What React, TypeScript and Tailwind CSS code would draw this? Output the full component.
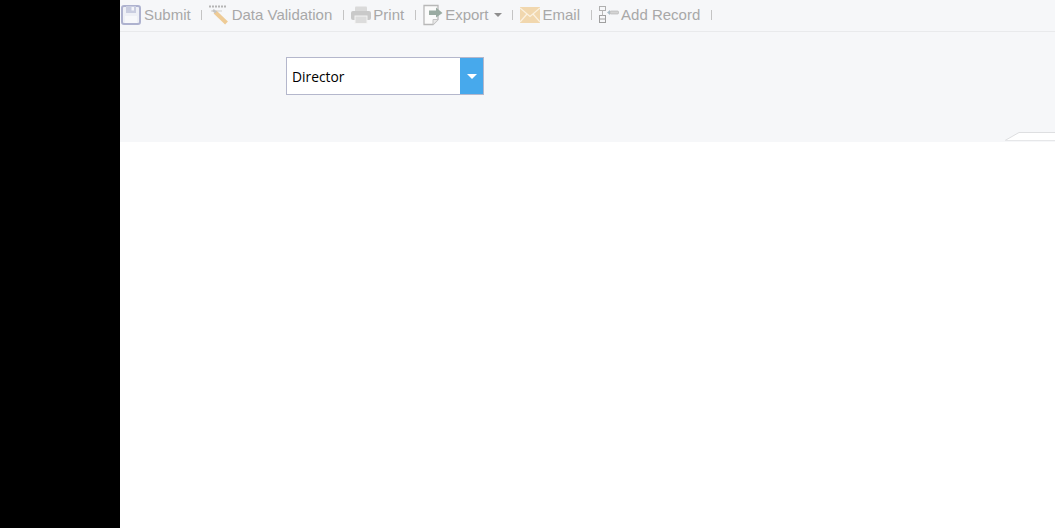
import React from "react";

const labelClass = "text-[15px] leading-none text-[#a8a8a8]";

function Divider({ className }: { className: string }) {
  return <div className={`h-[10px] w-px shrink-0 bg-[#c4c4c4] ${className}`}></div>;
}

function SaveIcon() {
  return (
    <svg width="20" height="20" viewBox="0 0 20 20" className="shrink-0">
      <rect x="1" y="1" width="18" height="18" rx="2" fill="#eef0f6" stroke="#aeb2cf" strokeWidth="2" />
      <rect x="5" y="1" width="10" height="7" fill="#c9cde0" />
      <rect x="10.500" y="2" width="2.500" height="3.500" fill="#f4f5f9" />
      <rect x="4" y="11" width="12" height="7" fill="#f7f8fb" />
    </svg>
  );
}

function RulerIcon() {
  return (
    <svg width="20" height="20" viewBox="0 0 20 20" className="shrink-0">
      <path d="M0 1.500h18" stroke="#b5b5b5" strokeWidth="2" strokeDasharray="2 1" />
      <path d="M2 6h11" stroke="#cfcfcf" strokeWidth="1" />
      <path d="M6 7l11.500 11" stroke="#eecb96" strokeWidth="4" />
      <path d="M4 5l3 2.500" stroke="#c4c4c4" strokeWidth="2.500" />
    </svg>
  );
}

function PrintIcon() {
  return (
    <svg width="20" height="18" viewBox="0 0 20 18" className="shrink-0">
      <rect x="4" y="0.500" width="12" height="6" rx="1" fill="#dadada" />
      <rect x="0" y="5" width="20" height="9" rx="2" fill="#c9c9c9" />
      <rect x="4" y="10" width="12" height="7.500" fill="#dcdcdc" stroke="#f4f4f4" strokeWidth="1" />
    </svg>
  );
}

function ExportIcon() {
  return (
    <svg width="20" height="22" viewBox="0 0 20 22" className="shrink-0">
      <path d="M1 1.500h14v14l-5 5H1z" fill="#fbfbfb" stroke="#b8b8b8" strokeWidth="1.300" />
      <path d="M10 20.500v-5h5" fill="#e8e8e8" stroke="#c4c4c4" strokeWidth="1" />
      <path d="M6 6.500h7V3.500L19.500 9 13 13.500V11H6z" fill="#9aaba2" />
    </svg>
  );
}

function MailIcon() {
  return (
    <svg width="20" height="16" viewBox="0 0 20 16" className="shrink-0">
      <rect width="20" height="16" fill="#f1d7ae" />
      <path d="M0 1l10 8.500 10-8.500M0 15l7-8M20 15l-7-8" fill="none" stroke="#fbf1e0" strokeWidth="1.300" />
    </svg>
  );
}

function RecordIcon() {
  return (
    <svg width="20" height="17" viewBox="0 0 20 17" className="shrink-0">
      <rect x="0.500" y="0.500" width="6" height="4" fill="#f6f7f9" stroke="#b0b0b0" />
      <rect x="0.500" y="9.500" width="6" height="7" fill="#f6f7f9" stroke="#a0a0a0" />
      <path d="M0.500 13h6" stroke="#a0a0a0" />
      <path d="M3.500 4.500v5" stroke="#b8b8b8" />
      <path d="M8 6.500l3-2.500v5z" fill="#a9bcc8" />
      <rect x="11" y="5" width="8.500" height="3" rx="1" fill="#d4d4d4" stroke="#b0b0b0" strokeWidth="0.600" />
    </svg>
  );
}

function App() {
  return (
    <div className="flex h-[528px] w-[1055px] overflow-hidden bg-white font-['Liberation_Sans',sans-serif]">
      <div className="w-[120px] shrink-0 bg-black"></div>
      <div className="flex min-w-0 flex-1 flex-col">
        <div className="relative h-[142px] shrink-0 bg-[#f6f7f9]">
          <div className="flex h-[32px] items-center border-b border-[#e9eaec] pb-[2px] pl-px">
            <SaveIcon />
            <span className={`${labelClass} ml-[3px]`}>Submit</span>
            <Divider className="ml-[10px]" />
            <div className="ml-[7px] flex"><RulerIcon /></div>
            <span className={`${labelClass} ml-[3px]`}>Data Validation</span>
            <Divider className="ml-[11px]" />
            <div className="ml-[7px] flex"><PrintIcon /></div>
            <span className={`${labelClass} ml-[2px]`}>Print</span>
            <Divider className="ml-[11px]" />
            <div className="ml-[7px] flex"><ExportIcon /></div>
            <span className={`${labelClass} ml-[2px]`}>Export</span>
            <div className="ml-[5px] mt-px h-0 w-0 border-x-[4px] border-t-[4px] border-x-transparent border-t-[#8f8f8f]"></div>
            <Divider className="ml-[10px]" />
            <div className="ml-[7px] flex"><MailIcon /></div>
            <span className={`${labelClass} ml-[3px]`}>Email</span>
            <Divider className="ml-[11px]" />
            <div className="ml-[7px] flex"><RecordIcon /></div>
            <span className={`${labelClass} ml-[2px]`}>Add Record</span>
            <Divider className="ml-[11px]" />
          </div>
          <div className="ml-[166px] mt-[25px] flex h-[38px] w-[198px] border border-[#b4b7cc] bg-white">
            <div className="flex flex-1 items-center pl-[5px] pt-[2px] font-['Open_Sans',sans-serif] text-[13.8px] text-black">Director</div>
            <div className="flex w-[23px] items-center justify-center bg-[#47a9ec]">
              <div className="h-0 w-0 border-x-[5px] border-t-[5px] border-x-transparent border-t-white"></div>
            </div>
          </div>
          <svg width="50" height="11" viewBox="0 0 50 11" className="absolute bottom-0 right-0">
            <path d="M0 9.500L14 1.500H50V9.500z" fill="#ffffff" />
            <path d="M0 9.500L14 1.500H50" fill="none" stroke="#dedfe1" />
            <path d="M0 9.500H50" fill="none" stroke="#e6e7e9" />
          </svg>
        </div>
        <div className="flex-1 bg-white"></div>
      </div>
    </div>
  );
}

export default App;
